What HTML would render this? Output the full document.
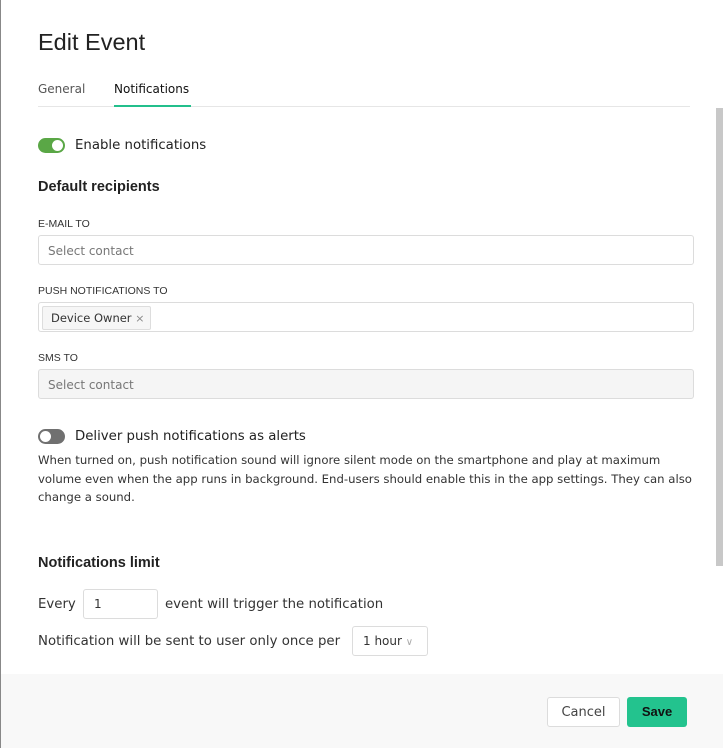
<!DOCTYPE html>
<html><head><style>
*{box-sizing:border-box;margin:0;padding:0}
body{width:723px;height:748px;background:#fff;font-family:"DejaVu Sans",sans-serif;color:#222;position:relative;overflow:hidden}
.a{position:absolute;white-space:nowrap}
.lbl{font-size:10.5px;color:#333;font-family:"Liberation Sans",sans-serif}
.inp{position:absolute;left:38px;width:656px;height:30px;border:1px solid #dcdcdc;border-radius:3px;font-size:12px;color:#777;padding:8px 9px}
.tog{position:absolute;left:38px;width:27px;height:15px;border-radius:8px}
.tog i{position:absolute;top:2px;width:11px;height:11px;border-radius:50%;background:#fff}
.h{font-family:"Liberation Sans",sans-serif;font-weight:bold;font-size:14.5px;color:#222}
</style></head><body>
<div class="a" style="left:0;top:0;width:1px;height:748px;background:#888"></div>
<div class="a" style="left:38px;top:29px;font-size:23.5px;color:#222;font-family:'Liberation Sans',sans-serif">Edit Event</div>
<div class="a" style="left:38px;top:82px;font-size:12px;color:#555">General</div>
<div class="a" style="left:114px;top:82px;font-size:12px;color:#111">Notifications</div>
<div class="a" style="left:38px;top:106px;width:652px;height:1px;background:#e6e6e6"></div>
<div class="a" style="left:114px;top:105px;width:77px;height:2px;background:#23bf8c"></div>
<div class="a" style="left:716px;top:108px;width:7px;height:458px;background:#c8c8c8"></div>
<div class="tog" style="top:138px;background:#5aa746"><i style="left:14px"></i></div>
<div class="a" style="left:75px;top:138px;font-size:13.3px">Enable notifications</div>
<div class="a h" style="left:38px;top:179px">Default recipients</div>
<div class="a lbl" style="left:38px;top:218px">E-MAIL TO</div>
<div class="inp" style="top:235px">Select contact</div>
<div class="a lbl" style="left:38px;top:285px">PUSH NOTIFICATIONS TO</div>
<div class="inp" style="top:302px;padding:3px"><span style="display:inline-block;border:1px solid #ddd;background:#f6f6f6;color:#333;font-size:11.5px;padding:4px 6px 4px 8px;border-radius:2px">Device Owner <span style="color:#888;font-size:11px">×</span></span></div>
<div class="a lbl" style="left:38px;top:352px">SMS TO</div>
<div class="inp" style="top:369px;background:#f5f5f5">Select contact</div>
<div class="tog" style="top:429px;background:#707070"><i style="left:2px"></i></div>
<div class="a" style="left:75px;top:429px;font-size:13.3px">Deliver push notifications as alerts</div>
<div class="a" style="left:38px;top:451px;font-size:11.7px;line-height:18.5px;color:#333">When turned on, push notification sound will ignore silent mode on the smartphone and play at maximum<br>volume even when the app runs in background. End-users should enable this in the app settings. They can also<br>change a sound.</div>
<div class="a h" style="left:38px;top:555px">Notifications limit</div>
<div class="a" style="left:38px;top:597px;font-size:13.3px;color:#333">Every</div>
<div class="a" style="left:83px;top:589px;width:75px;height:30px;border:1px solid #dcdcdc;border-radius:3px;font-size:12px;padding:7px 10px;color:#333">1</div>
<div class="a" style="left:165px;top:597px;font-size:13.3px;color:#333">event will trigger the notification</div>
<div class="a" style="left:38px;top:634px;font-size:13.3px;color:#333">Notification will be sent to user only once per</div>
<div class="a" style="left:352px;top:626px;width:76px;height:30px;border:1px solid #dcdcdc;border-radius:3px;font-size:12px;padding:7px 10px;color:#333">1 hour <span style="color:#aaa;font-size:10px">&#8744;</span></div>
<div class="a" style="left:1px;top:674px;width:722px;height:74px;background:#f8f8f8"></div>
<div class="a" style="left:547px;top:697px;width:73px;height:30px;border:1px solid #dcdcdc;border-radius:3px;background:#fff;font-size:13px;color:#444;text-align:center;line-height:29px">Cancel</div>
<div class="a" style="left:627px;top:697px;width:60px;height:30px;border-radius:3px;background:#23c38e;font-size:13px;font-weight:bold;color:#111;text-align:center;line-height:30px;font-family:'Liberation Sans',sans-serif">Save</div>
</body></html>
